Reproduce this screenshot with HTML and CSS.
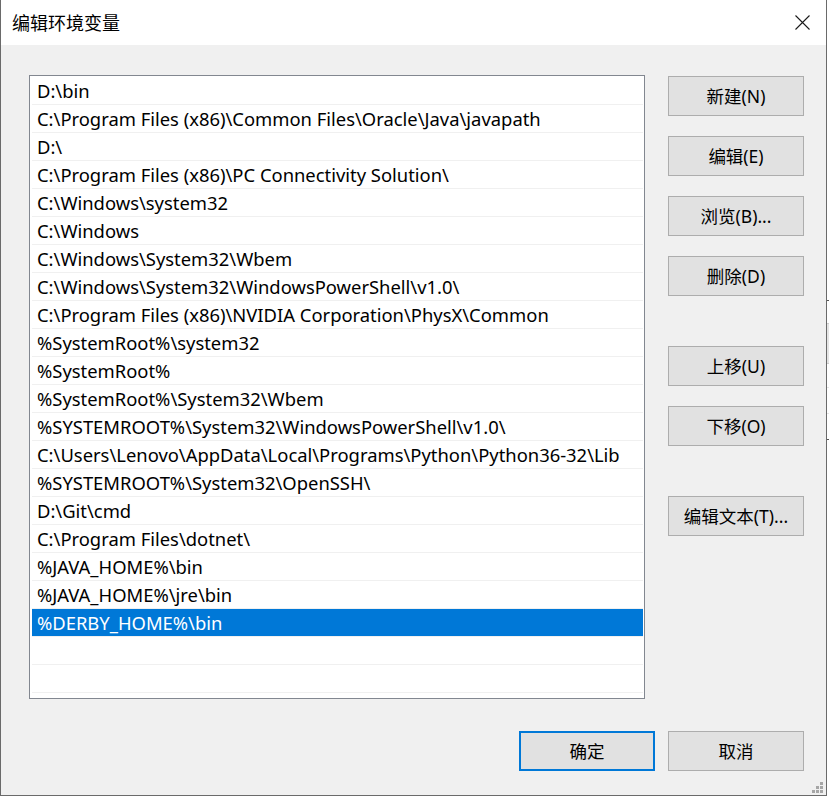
FILE: index.html
```html
<!DOCTYPE html>
<html>
<head>
    <meta charset="utf-8">
    <title>编辑环境变量</title>
    <link rel="stylesheet" href="styles.css">
</head>
<body>
    <div class="screen">
        <div class="window">
            <div class="titlebar">
                <span class="title">编辑环境变量</span>
                <span class="close">
                    <svg width="15" height="15" viewBox="0 0 15 15">
                        <path d="M0.5 0.5 L14.5 14.5 M14.5 0.5 L0.5 14.5" stroke="#1a1a1a" stroke-width="1.1" fill="none"/>
                    </svg>
                </span>
            </div>
            <div class="body">
                <div class="main">
                    <div class="list">
                        <div class="row">D:\bin</div>
                        <div class="row">C:\Program Files (x86)\Common Files\Oracle\Java\javapath</div>
                        <div class="row">D:\</div>
                        <div class="row">C:\Program Files (x86)\PC Connectivity Solution\</div>
                        <div class="row">C:\Windows\system32</div>
                        <div class="row">C:\Windows</div>
                        <div class="row">C:\Windows\System32\Wbem</div>
                        <div class="row">C:\Windows\System32\WindowsPowerShell\v1.0\</div>
                        <div class="row">C:\Program Files (x86)\NVIDIA Corporation\PhysX\Common</div>
                        <div class="row">%SystemRoot%\system32</div>
                        <div class="row">%SystemRoot%</div>
                        <div class="row">%SystemRoot%\System32\Wbem</div>
                        <div class="row">%SYSTEMROOT%\System32\WindowsPowerShell\v1.0\</div>
                        <div class="row">C:\Users\Lenovo\AppData\Local\Programs\Python\Python36-32\Lib</div>
                        <div class="row">%SYSTEMROOT%\System32\OpenSSH\</div>
                        <div class="row">D:\Git\cmd</div>
                        <div class="row">C:\Program Files\dotnet\</div>
                        <div class="row">%JAVA_HOME%\bin</div>
                        <div class="row">%JAVA_HOME%\jre\bin</div>
                        <div class="row selected">%DERBY_HOME%\bin</div>
                        <div class="row"></div>
                        <div class="row"></div>
                    </div>
                    <div class="side">
                        <button class="btn">新建(N)</button>
                        <button class="btn">编辑(E)</button>
                        <button class="btn">浏览(B)...</button>
                        <button class="btn">删除(D)</button>
                        <button class="btn group">上移(U)</button>
                        <button class="btn">下移(O)</button>
                        <button class="btn group">编辑文本(T)...</button>
                    </div>
                </div>
                <div class="footer">
                    <button class="btn default">确定</button>
                    <button class="btn">取消</button>
                </div>
            </div>
            <div class="grip">
                <span></span><span></span><span class="dot"></span>
                <span></span><span class="dot"></span><span class="dot"></span>
                <span class="dot"></span><span class="dot"></span><span class="dot"></span>
            </div>
        </div>
        <div class="behind">
            <div class="behind-panel"></div>
        </div>
    </div>
</body>
</html>
```

FILE: styles.css
```css
body {
    margin: 0;
    padding: 0;
    background-color: #fff;
    font-family: "Noto Sans", "Noto Sans CJK SC", sans-serif;
    color: #000;
}
.screen {
    display: flex;
    height: 798px;
}
/* the dialog itself */
.window {
    position: relative;
    width: 827px;
    height: 796px;
    box-sizing: border-box;
    border: 1px solid #6a6a6a;
    border-top: none;
    display: flex;
    flex-direction: column;
    background-color: #f0f0f0;
}
.titlebar {
    height: 45px;
    background-color: #fff;
    display: flex;
    align-items: center;
    justify-content: space-between;
    padding-left: 11px;
}
.title {
    font-family: "Noto Sans CJK SC", sans-serif;
    font-size: 18px;
    line-height: 45px;
    margin-top: -1px;
}
.close {
    width: 47px;
    height: 45px;
    display: flex;
    align-items: center;
    justify-content: center;
}
.body {
    flex: 1;
    padding: 30px 22px 0 28px;
}
.main {
    display: flex;
    gap: 23px;
}
/* path list */
.list {
    width: 616px;
    height: 624px;
    box-sizing: border-box;
    border: 1px solid #828790;
    background-color: #fff;
    padding: 1px 1px 0 2px;
    overflow: hidden;
}
.row {
    height: 27px;
    line-height: 28px;
    border-bottom: 1px solid #f0f0f0;
    padding-left: 5px;
    font-size: 18.4px;
    white-space: nowrap;
}
.row.selected {
    background-color: #0078d7;
    color: #fff;
}
.side {
    width: 136px;
    display: flex;
    flex-direction: column;
    gap: 20px;
    padding-top: 1px;
}
.btn {
    width: 136px;
    height: 40px;
    box-sizing: border-box;
    background-color: #e1e1e1;
    border: 1px solid #adadad;
    font-family: "Noto Sans", "Noto Sans CJK SC", sans-serif;
    font-size: 17.5px;
    color: #000;
    padding: 0;
    line-height: 36px;
}
.btn.group {
    margin-top: 30px; /* extra space between button groups */
}
.btn.default {
    border: 2px solid #0078d7;
}
.footer {
    display: flex;
    justify-content: flex-end;
    gap: 13px;
    margin-top: 32px;
}
/* resize grip in the corner */
.grip {
    position: absolute;
    right: 3px;
    bottom: 2px;
    display: grid;
    grid-template-columns: 3px 3px 3px;
    grid-template-rows: 3px 3px 3px;
    gap: 1px;
}
.grip .dot {
    background-color: #a6a6a6;
}
/* sliver of the window behind the dialog */
.behind {
    flex: 1;
    padding-top: 300px;
}
.behind-panel {
    height: 138px;
    border-top: 1px solid #555;
    border-bottom: 1px solid #555;
    background: linear-gradient(to bottom, #fff 0, #fff 22px, #ccc 22px, #ccc 23px, #e5e5e5 23px, #e5e5e5 62px, #ccc 62px, #ccc 63px, #fff 63px, #fff 86px, #e5e5e5 86px, #e5e5e5 87px, #fff 87px, #fff 112px, #e5e5e5 112px, #e5e5e5 113px, #fff 113px);
}
```
